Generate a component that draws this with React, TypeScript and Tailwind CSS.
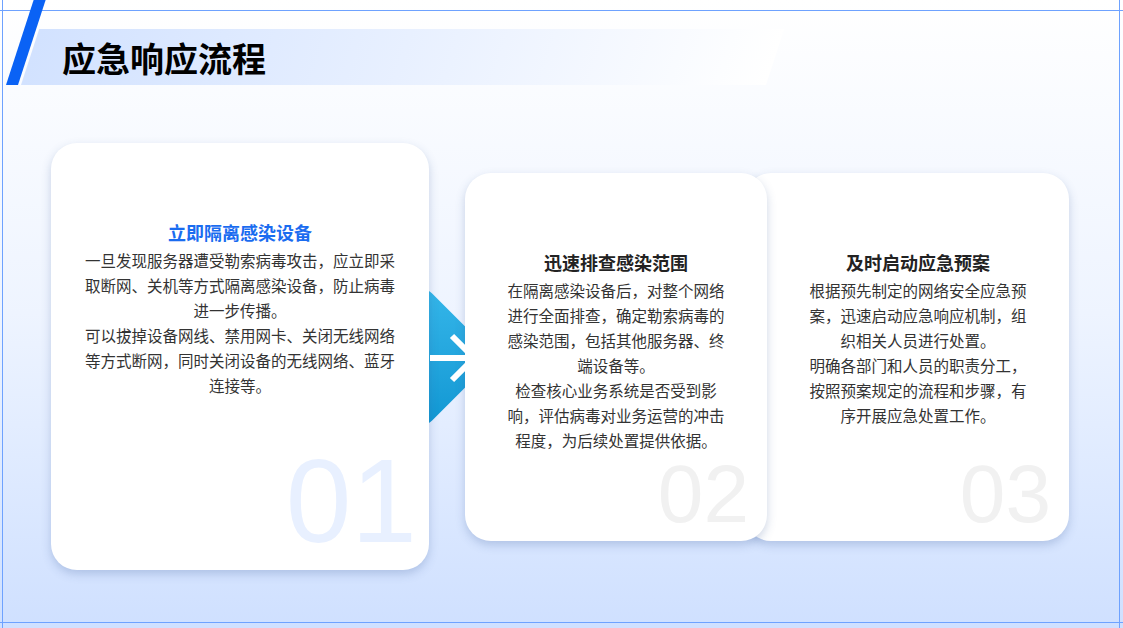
import React from "react";

const font = { fontFamily: '"Noto Sans CJK SC", "Noto Sans", sans-serif' };

function Card({ title, lines, num, active, className }: { title: string; lines: string[]; num: string; active?: boolean; className: string }) {
  return (
    <div className={`relative overflow-hidden bg-white rounded-[26px] shadow-[0_4px_10px_rgba(60,90,150,0.25)] flex flex-col items-center ${className}`}>
      <span
        className={`absolute font-light leading-none ${active ? "text-[#e8f0ff] text-[118px] right-[12px] bottom-[10px]" : "text-[#f1f1f1] text-[82px] right-[18px] bottom-[6px]"}`}
        style={{ fontFamily: '"Liberation Sans", sans-serif', fontWeight: 300 }}
      >
        {num}
      </span>
      <h2 className={`relative font-bold text-[18px] leading-[26px] ${active ? "text-[#1a6cf0]" : "text-[#222]"}`}>{title}</h2>
      <div className="relative mt-[3px] text-[15.5px] leading-[25px] text-[#333] text-center">
        {lines.map((l, i) => (
          <p key={i}>{l}</p>
        ))}
      </div>
    </div>
  );
}

export default function App() {
  return (
    <div className="relative w-[1123px] h-[628px] overflow-hidden bg-gradient-to-b from-[#ffffff] via-[#eef4ff] to-[#cfe0ff]" style={font}>
      <div className="absolute left-0 right-0 top-[10px] h-px bg-[#6ea2ff]" />
      <div className="absolute left-0 right-0 bottom-[5px] h-px bg-[#6ea2ff]" />
      <div className="absolute top-0 bottom-0 left-[2px] w-px bg-[#6ea2ff]" />
      <div className="absolute top-0 bottom-0 right-[3px] w-px bg-[#6ea2ff]" />

      {/* header */}
      <div className="relative h-[86px] pt-[29px]">
        <div className="absolute top-0 w-[12px] h-[85px] bg-[#0a62f5] skew-x-[-18deg] origin-bottom-left" style={{ left: 6 }} />
        <div className="w-[745px] h-[56px] skew-x-[-18deg] origin-bottom-left bg-gradient-to-r from-[#d2e2ff] via-[#e8f0ff] to-[#ffffff]" style={{ marginLeft: 21 }} />
        <h1 className="absolute left-[62px] top-[36px] text-[34px] leading-[44px] font-bold text-black">应急响应流程</h1>
      </div>

      <div className="relative flex items-start mt-[57px] ml-[51px]">
        <Card
          active
          num="01"
          title="立即隔离感染设备"
          className="w-[378px] h-[427px] pt-[76px] z-10"
          lines={["一旦发现服务器遭受勒索病毒攻击，应立即采", "取断网、关机等方式隔离感染设备，防止病毒", "进一步传播。", "可以拔掉设备网线、禁用网卡、关闭无线网络", "等方式断网，同时关闭设备的无线网络、蓝牙", "连接等。"]}
        />
        <div className="absolute left-[319px] top-[162px] w-[104px] h-[104px] rotate-45 rounded-[14px] bg-gradient-to-br from-[#35b7ea] to-[#0d96d2] z-0" />
        <svg className="absolute left-[379px] top-[188px] z-20" width="50" height="54" viewBox="0 0 50 54">
          <path d="M0 27H44M22 5L44 27L22 49" stroke="white" strokeWidth="6" fill="none" />
        </svg>
        <Card
          num="02"
          title="迅速排查感染范围"
          className="w-[302px] h-[368px] mt-[30px] ml-[36px] pt-[76px] z-10"
          lines={["在隔离感染设备后，对整个网络", "进行全面排查，确定勒索病毒的", "感染范围，包括其他服务器、终", "端设备等。", "检查核心业务系统是否受到影", "响，评估病毒对业务运营的冲击", "程度，为后续处置提供依据。"]}
        />
        <Card
          num="03"
          title="及时启动应急预案"
          className="w-[324px] h-[368px] mt-[30px] -ml-[22px] pt-[76px] pl-[22px] z-0"
          lines={["根据预先制定的网络安全应急预", "案，迅速启动应急响应机制，组", "织相关人员进行处置。", "明确各部门和人员的职责分工，", "按照预案规定的流程和步骤，有", "序开展应急处置工作。"]}
        />
      </div>
    </div>
  );
}
